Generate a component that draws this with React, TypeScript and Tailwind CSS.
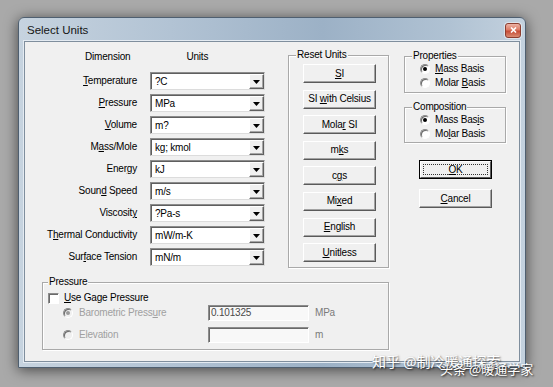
import React from "react";

const ROWS = [
  { pre: "", key: "T", post: "emperature", value: "?C" },
  { pre: "", key: "P", post: "ressure", value: "MPa" },
  { pre: "", key: "V", post: "olume", value: "m?" },
  { pre: "M", key: "a", post: "ss/Mole", value: "kg; kmol" },
  { pre: "Ener", key: "g", post: "y", value: "kJ" },
  { pre: "Soun", key: "d", post: " Speed", value: "m/s" },
  { pre: "Viscosit", key: "y", post: "", value: "?Pa-s" },
  { pre: "T", key: "h", post: "ermal Conductivity", value: "mW/m-K" },
  { pre: "Sur", key: "f", post: "ace Tension", value: "mN/m" },
];

const RESET = [
  { pre: "", key: "S", post: "I" },
  { pre: "SI ", key: "w", post: "ith Celsius" },
  { pre: "Mola", key: "r", post: " SI" },
  { pre: "m", key: "k", post: "s" },
  { pre: "c", key: "g", post: "s" },
  { pre: "Mi", key: "x", post: "ed" },
  { pre: "", key: "E", post: "nglish" },
  { pre: "", key: "U", post: "nitless" },
];

type Mn = { pre: string; key: string; post: string };

function Label({ m }: { m: Mn }) {
  return (
    <span className="whitespace-pre">
      {m.pre}
      <span className="underline decoration-1 underline-offset-[1px]">{m.key}</span>
      {m.post}
    </span>
  );
}

function Arrow() {
  return (
    <svg width="7" height="4" viewBox="0 0 7 4">
      <path d="M0 0h7L3.5 4z" fill="#000" />
    </svg>
  );
}

function Combo({ value }: { value: string }) {
  return (
    <div className="flex h-[18px] w-[115px] border border-t-[#8c8c8c] border-l-[#8c8c8c] border-r-[#dcdcdc] border-b-[#dcdcdc] bg-white shadow-[inset_1px_1px_0_#5f5f5f]">
      <span className="flex-1 pl-[4px] pt-[2px] leading-[14px]">{value}</span>
      <span className="mt-[1px] flex w-[15px] items-center justify-center border border-t-white border-l-white border-r-[#5f5f5f] border-b-[#5f5f5f] bg-[#f0f0f0] shadow-[inset_-1px_-1px_0_#a6a6a6]">
        <Arrow />
      </span>
    </div>
  );
}

function Btn({ children }: { children: React.ReactNode }) {
  return (
    <button
      type="button"
      className="flex h-[19px] w-[73px] items-center justify-center border border-t-white border-l-white border-r-[#5a5a5a] border-b-[#5a5a5a] bg-[#f0f0f0] leading-[12px] shadow-[inset_-1px_-1px_0_#a3a3a3]"
    >
      <span className="whitespace-pre">{children}</span>
    </button>
  );
}

function Radio({ on, disabled }: { on?: boolean; disabled?: boolean }) {
  return (
    <span
      className={
        "flex h-[10px] w-[10px] shrink-0 items-center justify-center rounded-full border border-t-[#8c8c8c] border-l-[#8c8c8c] border-r-white border-b-white shadow-[inset_1px_1px_0_#6a6a6a] " +
        (disabled ? "bg-[#f0f0f0]" : "bg-white")
      }
    >
      {on && (
        <span className={"h-[4px] w-[4px] rounded-full " + (disabled ? "bg-[#9a9a9a]" : "bg-black")} />
      )}
    </span>
  );
}

// group box: the caption sits on the top edge, children get their own padding
function Group({
  title,
  className,
  pad,
  cap = "ml-[7px]",
  children,
}: {
  title: string;
  className: string;
  pad: string;
  cap?: string;
  children: React.ReactNode;
}) {
  return (
    <div className={"border border-[#a9a9a9] shadow-[inset_1px_1px_0_#fff,1px_1px_0_#fff] " + className}>
      <div className={"-mt-[7px] w-fit bg-[#f0f0f0] px-[1px] leading-[12px] " + cap}>{title}</div>
      <div className={pad}>{children}</div>
    </div>
  );
}

function Edit({ value }: { value: string }) {
  return (
    <div className="h-[16px] w-[101px] border border-t-[#8c8c8c] border-l-[#8c8c8c] border-r-white border-b-white bg-[#f8f8f8] pl-[2px] leading-[14px] text-[#4a4a4a] shadow-[inset_1px_1px_0_#6a6a6a]">
      {value}
    </div>
  );
}

export default function App() {
  return (
    <div className="relative h-[387px] w-[553px] overflow-hidden bg-[#a9a9a9] pl-[18px] pt-[17px] font-['Liberation_Sans',Arial,sans-serif]">
      <div className="flex h-[351px] w-[508px] flex-col rounded-t-[6px] border border-[#4f5f70] bg-[linear-gradient(90deg,#c6d3df_0%,#b2c3d4_30%,#9cb1c6_60%,#b0c2d3_85%,#c3d1de_100%)] shadow-[0_2px_14px_rgba(0,0,0,0.6)]">
        {/* title bar */}
        <div className="flex h-[23px] items-center justify-between pl-[8px] pr-[4px] pt-[1px]">
          <span className="text-[11.5px] leading-[14px] text-[#151515]">Select Units</span>
          <span className="flex h-[15px] w-[16px] items-center justify-center rounded-[3px] border border-[#8d3d2f] bg-[linear-gradient(180deg,#ecb3a5_0%,#dc7a64_45%,#c64c36_55%,#d98b72_100%)] shadow-[0_0_0_1px_rgba(255,255,255,0.45)]">
            <svg width="7" height="6" viewBox="0 0 7 6">
              <path d="M1 0.5L6 5.5M6 0.5L1 5.5" stroke="#fff" strokeWidth="1.6" />
            </svg>
          </span>
        </div>

        {/* client area */}
        <div className="mx-[5px] h-[321px] border border-[#7f8e9d] bg-[#f0f0f0] text-[10px] leading-[12px] tracking-[-0.2px] text-black shadow-[0_0_0_1px_#e4ebf2]">
          <div className="flex items-start">
            {/* dimensions and units */}
            <div className="mt-[8px] w-[263px]">
              <div className="flex h-[13px] items-center">
                <span className="ml-[60px]">Dimension</span>
                <span className="ml-[56px]">Units</span>
              </div>
              <div className="mt-[9px] flex flex-col gap-[4px]">
                {ROWS.map((r) => (
                  <div key={r.value} className="flex h-[18px] items-center">
                    <span className="w-[112px] text-right">
                      <Label m={r} />
                    </span>
                    <span className="ml-[13px]">
                      <Combo value={r.value} />
                    </span>
                  </div>
                ))}
              </div>
            </div>

            {/* reset units */}
            <Group title="Reset Units" className="mt-[13px] w-[101px]" pad="flex flex-col gap-[6.6px] pb-[5px] pl-[14px] pt-[3px]">
              {RESET.map((b) => (
                <Btn key={b.pre + b.key + b.post}>
                  <Label m={b} />
                </Btn>
              ))}
            </Group>

            {/* properties / composition / ok */}
            <div className="ml-[15px] mt-[14px] flex w-[102px] flex-col">
              <Group title="Properties" className="" pad="pb-[2px] pl-[15px]">
                <div className="flex h-[14px] items-center">
                  <Radio on />
                  <span className="ml-[5px]">
                    <span className="underline decoration-1 underline-offset-[1px]">M</span>ass Basis
                  </span>
                </div>
                <div className="flex h-[14px] items-center">
                  <Radio />
                  <span className="ml-[5px]">
                    Molar <span className="underline decoration-1 underline-offset-[1px]">B</span>asis
                  </span>
                </div>
              </Group>
              <Group title="Composition" className="mt-[14px]" pad="pb-[1px] pl-[15px]">
                <div className="flex h-[14px] items-center">
                  <Radio on />
                  <span className="ml-[5px]">
                    Mass Bas<span className="underline decoration-1 underline-offset-[1px]">i</span>s
                  </span>
                </div>
                <div className="flex h-[14px] items-center">
                  <Radio />
                  <span className="ml-[5px]">
                    Mo<span className="underline decoration-1 underline-offset-[1px]">l</span>ar Basis
                  </span>
                </div>
              </Group>
              <div className="ml-[15px] mt-[17px] h-[19px] w-[73px] border border-black">
                <button
                  type="button"
                  className="flex h-full w-full items-center justify-center border border-t-white border-l-white border-r-[#5a5a5a] border-b-[#5a5a5a] bg-[#f0f0f0] p-[2px] leading-[12px]"
                >
                  <span className="flex h-full w-full items-center justify-center border border-dotted border-[#333]">
                    <span>
                      <span className="underline decoration-1 underline-offset-[1px]">O</span>K
                    </span>
                  </span>
                </button>
              </div>
              <div className="ml-[15px] mt-[10px]">
                <Btn>
                  <span className="underline decoration-1 underline-offset-[1px]">C</span>ancel
                </Btn>
              </div>
            </div>
          </div>

          {/* pressure */}
          <Group title="Pressure" cap="ml-[5px]" className="ml-[17px] mt-[14px] w-[347px]" pad="pb-[6px] pl-[5px] pt-[4px]">
            <div className="flex h-[12px] items-center">
              <span className="h-[11px] w-[11px] border border-t-[#8c8c8c] border-l-[#8c8c8c] border-r-white border-b-white bg-white shadow-[inset_1px_1px_0_#6a6a6a]" />
              <span className="ml-[5px]">
                <span className="underline decoration-1 underline-offset-[1px]">U</span>se Gage Pressure
              </span>
            </div>
            <div className="mt-[1px] flex h-[16px] items-center">
              <div className="flex w-[160px] items-center pl-[15px] text-[#a0a0a0]">
                <Radio on disabled />
                <span className="ml-[6px]">
                  Barometric Press<span className="underline decoration-1 underline-offset-[1px]">u</span>re
                </span>
              </div>
              <Edit value="0.101325" />
              <span className="ml-[6px] text-[#7a7a7a]">MPa</span>
            </div>
            <div className="mt-[6px] flex h-[16px] items-center">
              <div className="flex w-[160px] items-center pl-[15px] text-[#a0a0a0]">
                <Radio disabled />
                <span className="ml-[6px]">Elevation</span>
              </div>
              <Edit value="" />
              <span className="ml-[6px] text-[#7a7a7a]">m</span>
            </div>
          </Group>
        </div>
      </div>

      {/* watermarks */}
      <span className="absolute left-[372px] top-[352px] whitespace-nowrap font-['Noto_Sans_CJK_SC',sans-serif] text-[14px] leading-[18px] text-white [text-shadow:1px_1px_2px_rgba(0,0,0,0.7)]">
        知乎 @制冷暖通探索
      </span>
      <span className="absolute left-[440px] top-[361px] whitespace-nowrap font-['Noto_Sans_CJK_SC',sans-serif] text-[13px] leading-[16px] text-white [text-shadow:1px_1px_2px_rgba(0,0,0,0.8)]">
        头条 @暖通学家
      </span>
    </div>
  );
}
